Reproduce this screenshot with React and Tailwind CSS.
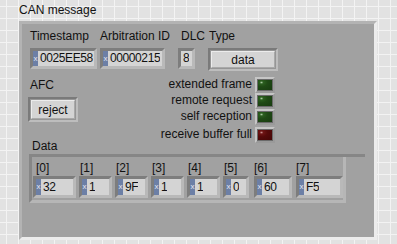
import React from "react";

const font = { fontFamily: '"Liberation Sans", Arial, sans-serif' };

const lbl = "block whitespace-nowrap text-[12px] leading-[14px] text-[#111]";

function Num({ value, w, h = 21, radix = true }) {
  return (
    <div
      className="flex border-[3px] border-t-[#7d7d7d] border-l-[#7d7d7d] border-b-[#b9b9b9] border-r-[#b9b9b9] bg-[#d4d4d4]"
      style={{ width: w, height: h }}
    >
      {radix && (
        <div className="flex w-[5px] shrink-0 items-center justify-center bg-[#6c7fa6] text-[8px] leading-none text-[#e4e8f0]">x</div>
      )}
      <div className="flex items-end overflow-hidden whitespace-nowrap pb-[1px] pl-[2px] text-[12px] leading-[14px] tracking-[-0.4px] text-[#111]">
        {value}
      </div>
    </div>
  );
}

function Ring({ value, w, h }) {
  return (
    <div
      className="flex border-[2px] border-t-[#7a7a7a] border-l-[#7a7a7a] border-b-[#bdbdbd] border-r-[#bdbdbd] bg-[#969696] p-[1px]"
      style={{ width: w, height: h }}
    >
      <div className="flex h-full w-full items-center justify-center border border-t-[#ececec] border-l-[#ececec] border-b-[#a9a9a9] border-r-[#a9a9a9] bg-[#d4d4d4] text-[12px] leading-[14px] text-[#111]">
        {value}
      </div>
    </div>
  );
}

function Led({ label, red, className = "" }) {
  return (
    <div className={`flex h-[16px] items-start justify-end gap-[3px] ${className}`}>
      <span className={lbl}>{label}</span>
      <div className="h-[16px] w-[20px] border-[2px] border-t-[#c6c6c6] border-l-[#c6c6c6] border-b-[#9a9a9a] border-r-[#9a9a9a] bg-[#6a6a6a] p-[1px]">
        <div
          className={`h-full w-full ${
            red
              ? "bg-[radial-gradient(ellipse_at_25%_25%,#c89090_0px,#6e1414_2px,#560a0a_6px,#440606_100%)]"
              : "bg-[radial-gradient(ellipse_at_25%_25%,#a8c8a0_0px,#2b5e1f_2px,#1f4a15_6px,#183b10_100%)]"
          }`}
        />
      </div>
    </div>
  );
}

const data = [
  ["[0]", "32", 43, 3, "pl-[3px]"],
  ["[1]", "1", 33, 3, "pl-[1px]"],
  ["[2]", "9F", 33, 3, "pl-[1px]"],
  ["[3]", "1", 33, 3, "pl-[1px]"],
  ["[4]", "1", 33, 3, "pl-[1px]"],
  ["[5]", "0", 26, 3, "pl-[1px]"],
  ["[6]", "60", 38, 5, "pl-[0px]"],
  ["[7]", "F5", 47, 4, "pl-[0px]"],
];

export default function App() {
  return (
    <div
      className="h-[244px] w-[397px] overflow-hidden bg-[#e2e2e2] bg-[linear-gradient(to_right,#f3f3f3_1px,transparent_1px),linear-gradient(to_bottom,#f3f3f3_1px,transparent_1px)] bg-size-[12px_12px] bg-position-[6px_6px] pl-[19px] pt-[3px]"
      style={font}
    >
      <div className={lbl}>CAN message</div>
      <div className="mt-[4px] h-[219px] w-[358px] border-[3px] border-t-[#b3b3b3] border-l-[#b3b3b3] border-b-[#ececec] border-r-[#ececec] bg-[#a1a1a1] pl-[8px] pt-[5px]">
        <div className="flex">
          <div className="flex w-[70px] flex-col gap-[5px]">
            <span className={lbl}>Timestamp</span>
            <Num value="0025EE58" w={67} />
          </div>
          <div className="flex w-[78px] flex-col gap-[5px]">
            <span className={lbl}>Arbitration ID</span>
            <Num value="00000215" w={65} />
          </div>
          <div className="flex w-[30px] flex-col gap-[5px]">
            <span className={`${lbl} pl-[3px]`}>DLC</span>
            <Num value="8" w={17} radix={false} />
          </div>
          <div className="flex flex-col gap-[5px]">
            <span className={`${lbl} pl-[1px]`}>Type</span>
            <Ring value="data" w={70} h={23} />
          </div>
        </div>
        <div className="mt-[6px] flex w-[245px] justify-between">
          <div className="flex flex-col">
            <span className={`${lbl} mt-[1px]`}>AFC</span>
            <div className="ml-[-2px] mt-[5px]">
              <Ring value="reject" w={50} h={25} />
            </div>
            <span className={`${lbl} mt-[17px] pl-[2px]`}>Data</span>
          </div>
          <div className="flex flex-col">
            <Led label="extended frame" />
            <Led label="remote request" />
            <Led label="self reception" />
            <Led label="receive buffer full" red className="mt-[2px]" />
          </div>
        </div>
        <div className="ml-[-1px] mt-[1px] w-[336px] border-t-[3px] border-t-[#868686]">
          <div className="flex w-[317px] border-[3px] border-t-0 border-l-[#868686] border-b-[#b6b6b6] border-r-[#b6b6b6] pb-[2px] pl-[1px] pt-[4px]">
            {data.map(([idx, v, w, gap, pl], i) => (
              <div key={idx} className="flex flex-col gap-[1px]" style={{ marginLeft: i === 0 ? 0 : gap }}>
                <span className={`${lbl} ${pl}`}>{idx}</span>
                <Num value={v} w={w} h={22} />
              </div>
            ))}
          </div>
        </div>
      </div>
    </div>
  );
}
